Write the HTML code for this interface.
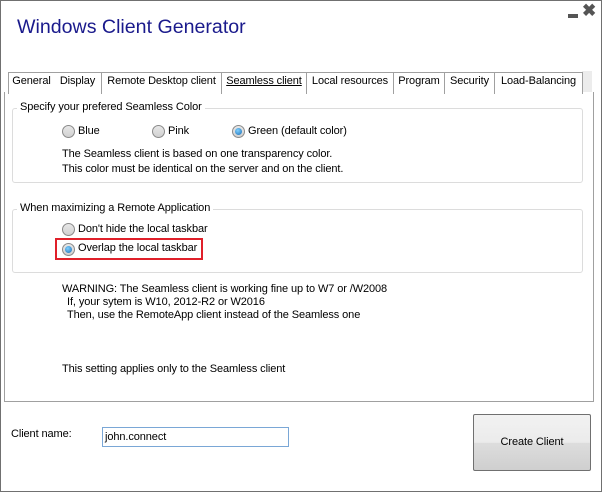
<!DOCTYPE html>
<html><head><style>
body{margin:0;width:602px;height:492px;overflow:hidden;font-family:"Liberation Sans",Arial,sans-serif;font-size:11px;letter-spacing:-0.1px;color:#000;}
.win{position:absolute;left:0;top:0;width:600px;height:490px;border:1px solid #707070;background:#fff;}
.a{position:absolute;white-space:nowrap;}
.title{left:16px;top:15px;font-size:19.6px;letter-spacing:0;color:#1a1a8c;}
.panel{position:absolute;left:3px;top:91px;width:588px;height:309px;border:1px solid #a0a0a0;border-top:none;background:#fff;}
.tab{position:absolute;top:71px;height:21px;border-right:1px solid #a0a0a0;line-height:16px;text-align:center;background:#fff;white-space:nowrap;}
.grp{position:absolute;border:1px solid #dcdcdc;border-radius:3px;}
.leg{position:absolute;background:#fff;padding:0 3px;}
.rad{position:absolute;width:11px;height:11px;border-radius:50%;border:1px solid #8a8a8a;background:linear-gradient(#e8e8e8,#d0d0d0);}
.rad.on::after{content:"";position:absolute;left:2px;top:2px;width:7px;height:7px;border-radius:50%;background:radial-gradient(circle at 40% 35%,#7fd0ff,#1a6db5);}
</style></head><body>
<div class="win">
<div class="a title">Windows Client Generator</div>
<div class="a" style="left:567px;top:13px;width:10px;height:4px;background:#555"></div>
<div class="a" style="left:581px;top:0px;font-size:17px;font-weight:bold;color:#555">✖</div>
<div class="a" style="left:581px;top:70px;width:10px;height:21px;background:#ececec"></div>
<div class="a" style="left:581px;top:91px;width:10px;border-top:1px solid #a0a0a0"></div>
<div class="panel"></div>
<div class="tab" style="left:7px;width:45px;border-left:1px solid #a0a0a0;border-top:1px solid #a0a0a0">General</div>
<div class="tab" style="left:53px;width:47px;border-top:1px solid #a0a0a0">Display</div>
<div class="tab" style="left:101px;width:119px;border-top:1px solid #a0a0a0">Remote Desktop client</div>
<div class="tab" style="left:221px;width:84px;border-top:1px solid #a0a0a0"><u>Seamless client</u></div>
<div class="tab" style="left:306px;width:86px;border-top:1px solid #a0a0a0">Local resources</div>
<div class="tab" style="left:393px;width:50px;border-top:1px solid #a0a0a0">Program</div>
<div class="tab" style="left:444px;width:49px;border-top:1px solid #a0a0a0">Security</div>
<div class="tab" style="left:494px;width:87px;border-top:1px solid #a0a0a0">Load-Balancing</div>

<div class="grp" style="left:11px;top:107px;width:569px;height:73px"></div>
<div class="a leg" style="left:16px;top:100px">Specify your prefered Seamless Color</div>
<div class="rad" style="left:61px;top:124px"></div><div class="a" style="left:77px;top:124px">Blue</div>
<div class="rad" style="left:151px;top:124px"></div><div class="a" style="left:167px;top:124px">Pink</div>
<div class="rad on" style="left:231px;top:124px"></div><div class="a" style="left:247px;top:124px">Green (default color)</div>
<div class="a" style="left:61px;top:147px">The Seamless client is based on one transparency color.</div>
<div class="a" style="left:61px;top:162px">This color must be identical on the server and on the client.</div>

<div class="grp" style="left:11px;top:208px;width:569px;height:62px"></div>
<div class="a leg" style="left:16px;top:201px">When maximizing a Remote Application</div>
<div class="rad" style="left:61px;top:222px"></div><div class="a" style="left:77px;top:222px">Don't hide the local taskbar</div>
<div class="a" style="left:54px;top:237px;width:148px;height:22px;border:2px solid #e0202a;box-sizing:border-box"></div>
<div class="rad on" style="left:61px;top:242px"></div><div class="a" style="left:77px;top:241px">Overlap the local taskbar</div>

<div class="a" style="left:61px;top:282px">WARNING: The Seamless client is working fine up to W7 or /W2008</div>
<div class="a" style="left:66px;top:295px">If, your sytem is W10, 2012-R2 or W2016</div>
<div class="a" style="left:66px;top:308px">Then, use the RemoteApp client instead of the Seamless one</div>
<div class="a" style="left:61px;top:362px">This setting applies only to the Seamless client</div>

<div class="a" style="left:10px;top:427px">Client name:</div>
<div class="a" style="left:101px;top:426px;width:183px;height:18px;border:1px solid #7aa7d6;line-height:18px;padding-left:2px">john.connect</div>
<div class="a" style="left:472px;top:413px;width:116px;height:55px;border:1px solid #707070;border-radius:2px;background:linear-gradient(#f2f2f2 0%,#ebebeb 50%,#dddddd 51%,#cfcfcf 100%);text-align:center;line-height:55px">Create Client</div>
</div>
</body></html>
